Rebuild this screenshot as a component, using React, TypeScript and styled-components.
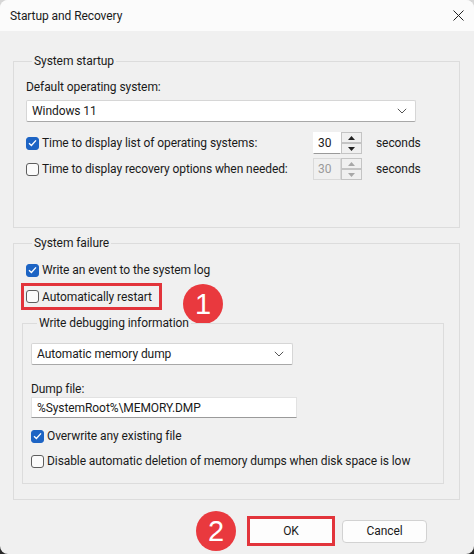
import React from "react";
import styled, { createGlobalStyle } from "styled-components";

const Global = createGlobalStyle`
  html, body { margin: 0; padding: 0; }
  body {
    background: linear-gradient(#d6d6d6 0%, #d6d6d6 92%, #2a2a2a 96%);
    font-family: Roboto, "Noto Sans", sans-serif;
    font-size: 12px;
    letter-spacing: -0.08px;
    color: #1a1a1a;
  }
  * { box-sizing: border-box; }
`;

const Window = styled.div`
  width: 474px;
  height: 554px;
  background: #f0f0f0;
  border-radius: 8px;
  overflow: hidden;
  display: flex;
  flex-direction: column;
`;

const TitleBar = styled.div`
  height: 31px;
  background: #fbfbfb;
  display: flex;
  align-items: center;
  justify-content: space-between;
  padding: 0 10px 0 10px;
  font-size: 12px;
  flex-shrink: 0;
`;

const Body = styled.div`
  padding: 22px 14px 0 13px;
  display: flex;
  flex-direction: column;
`;

const Group = styled.fieldset<{ $pt: number; $pb: number; $pl: number; $mt?: number; $w?: number; $ml?: number }>`
  margin: ${(p) => p.$mt ?? 0}px 0 0 ${(p) => p.$ml ?? 0}px;
  padding: ${(p) => p.$pt}px 0 ${(p) => p.$pb}px ${(p) => p.$pl}px;
  border: 1px solid #dcdcdc;
  border-radius: 0;
  min-width: 0;
  ${(p) => (p.$w ? `width: ${p.$w}px;` : "")}
  position: relative;
  display: flex;
  flex-direction: column;
`;

const Legend = styled.legend`
  padding: 0 2px;
  margin-left: 6px;
  line-height: 16px;
  height: 16px;
`;

const Label = styled.div<{ $mt?: number }>`
  line-height: 16px;
  margin-top: ${(p) => p.$mt ?? 0}px;
`;

const SelectBox = styled.div<{ $w: number; $mt?: number }>`
  width: ${(p) => p.$w}px;
  height: 22px;
  margin-top: ${(p) => p.$mt ?? 0}px;
  background: #fff;
  border: 1px solid #d6d6d6;
  border-bottom-color: #a8a8a8;
  border-radius: 2px;
  display: flex;
  align-items: center;
  justify-content: space-between;
  padding: 0 8px 0 5px;
`;

const TextInput = styled.div<{ $w: number }>`
  width: ${(p) => p.$w}px;
  height: 21px;
  background: #fff;
  border: 1px solid #e2e2e2;
  border-bottom-color: #9a9a9a;
  display: flex;
  align-items: center;
  padding: 0 5px;
`;

const Row = styled.div<{ $mt?: number; $h?: number }>`
  display: flex;
  align-items: center;
  height: ${(p) => p.$h ?? 20}px;
  margin-top: ${(p) => p.$mt ?? 0}px;
`;

const Box = styled.span<{ $on: boolean }>`
  width: 13px;
  height: 13px;
  border-radius: 3px;
  flex-shrink: 0;
  margin-right: 3px;
  display: inline-flex;
  align-items: center;
  justify-content: center;
  background: ${(p) => (p.$on ? "#1d64c4" : "#fbfbfb")};
  border: 1px solid ${(p) => (p.$on ? "#1d64c4" : "#5e5e5e")};
`;

const CheckLabel = styled.span<{ $w?: number }>`
  line-height: 16px;
  ${(p) => (p.$w ? `width: ${p.$w}px;` : "")}
`;

const Spin = styled.div`
  display: flex;
  height: 22px;
`;

const SpinField = styled.div<{ $off?: boolean }>`
  width: 28px;
  height: 22px;
  background: ${(p) => (p.$off ? "#f0f0f0" : "#fff")};
  color: ${(p) => (p.$off ? "#9a9a9a" : "#1a1a1a")};
  border: 1px solid ${(p) => (p.$off ? "#dadada" : "#fff")};
  border-bottom-color: ${(p) => (p.$off ? "#dadada" : "#9a9a9a")};
  display: flex;
  align-items: center;
  padding-left: 4px;
`;

const SpinButtons = styled.div`
  width: 21px;
  display: flex;
  flex-direction: column;
`;

const SpinBtn = styled.div<{ $off?: boolean }>`
  height: 11px;
  background: #f0f0f0;
  border: 1px solid #c4c4c4;
  display: flex;
  align-items: center;
  justify-content: center;
  color: ${(p) => (p.$off ? "#a8a8a8" : "#222")};
`;

const Unit = styled.span`
  margin-left: 14px;
  line-height: 16px;
`;

const Highlight = styled.div<{ $mt?: number; $ml?: number }>`
  border: 3px solid #e2343b;
  margin-top: ${(p) => p.$mt ?? 0}px;
  margin-left: ${(p) => p.$ml ?? 0}px;
  width: fit-content;
  display: flex;
  align-items: center;
`;

const Badge = styled.div`
  width: 40px;
  height: 40px;
  border-radius: 50%;
  background: #e9393e;
  color: #fff;
  font-family: "Liberation Sans", Arial, sans-serif;
  font-size: 29px;
  display: flex;
  align-items: center;
  justify-content: center;
  flex-shrink: 0;
`;

const FloatBadge = styled(Badge)`
  position: absolute;
  left: 169px;
  top: 33px;
`;

const Footer = styled.div`
  display: flex;
  justify-content: flex-end;
  align-items: center;
  padding: 11px 47px 0 0;
`;

const Button = styled.div<{ $bare?: boolean }>`
  width: ${(p) => (p.$bare ? 82 : 85)}px;
  height: ${(p) => (p.$bare ? 24 : 23)}px;
  background: #fdfdfd;
  border: ${(p) => (p.$bare ? "none" : "1px solid #d2d2d2")};
  border-radius: ${(p) => (p.$bare ? 0 : 4)}px;
  display: flex;
  align-items: center;
  justify-content: center;
`;

const Chevron = () => (
  <svg width="10" height="6" viewBox="0 0 10 6">
    <path d="M0.8 0.8 L5 5 L9.2 0.8" fill="none" stroke="#555" strokeWidth="1" />
  </svg>
);

const Tick = () => (
  <svg width="9" height="8" viewBox="0 0 9 8">
    <path d="M1 4.2 L3.4 6.4 L8 1.4" fill="none" stroke="#fff" strokeWidth="1.4" />
  </svg>
);

const Arrow = ({ up }: { up: boolean }) => (
  <svg width="7" height="4" viewBox="0 0 7 4">
    <path d={up ? "M0 4 L3.5 0 L7 4 Z" : "M0 0 L3.5 4 L7 0 Z"} fill="currentColor" />
  </svg>
);

const Close = () => (
  <svg width="11" height="11" viewBox="0 0 11 11">
    <path d="M0.5 0.5 L10.5 10.5 M10.5 0.5 L0.5 10.5" stroke="#222" strokeWidth="1" />
  </svg>
);

const Check = ({ on, children, w }: { on: boolean; children: React.ReactNode; w?: number }) => (
  <>
    <Box $on={on}>{on && <Tick />}</Box>
    <CheckLabel $w={w}>{children}</CheckLabel>
  </>
);

const Spinner = ({ off }: { off?: boolean }) => (
  <Spin>
    <SpinField $off={off}>30</SpinField>
    <SpinButtons>
      <SpinBtn $off={off}>
        <Arrow up />
      </SpinBtn>
      <SpinBtn $off={off}>
        <Arrow up={false} />
      </SpinBtn>
    </SpinButtons>
  </Spin>
);

export default function App() {
  return (
    <>
      <Global />
      <Window>
        <TitleBar>
          <span>Startup and Recovery</span>
          <Close />
        </TitleBar>
        <Body>
          <Group $pt={10} $pb={47} $pl={12}>
            <Legend>System startup</Legend>
            <Label>Default operating system:</Label>
            <SelectBox $w={390} $mt={5}>
              <span>Windows 11</span>
              <Chevron />
            </SelectBox>
            <Row $mt={10} $h={22}>
              <Check on w={271}>Time to display list of operating systems:</Check>
              <Spinner />
              <Unit>seconds</Unit>
            </Row>
            <Row $mt={4} $h={22}>
              <Check on={false} w={271}>Time to display recovery options when needed:</Check>
              <Spinner off />
              <Unit>seconds</Unit>
            </Row>
          </Group>

          <Group $pt={9} $pb={15} $pl={12} $mt={7}>
            <Legend>System failure</Legend>
            <Row>
              <Check on>Write an event to the system log</Check>
            </Row>
            <Highlight $mt={3} $ml={-5}>
              <Row $h={21} style={{ padding: "0 7px 0 2px" }}>
                <Check on={false}>Automatically restart</Check>
              </Row>
            </Highlight>
            <FloatBadge>1</FloatBadge>

            <Group $pt={12} $pb={12} $pl={8} $mt={5} $ml={-4} $w={422}>
              <Legend>Write debugging information</Legend>
              <SelectBox $w={262}>
                <span>Automatic memory dump</span>
                <Chevron />
              </SelectBox>
              <Label $mt={16}>Dump file:</Label>
              <TextInput $w={266}>%SystemRoot%\MEMORY.DMP</TextInput>
              <Row $mt={8}>
                <Check on>Overwrite any existing file</Check>
              </Row>
              <Row $mt={5}>
                <Check on={false}>Disable automatic deletion of memory dumps when disk space is low</Check>
              </Row>
            </Group>
          </Group>
        </Body>
        <Footer>
          <Badge style={{ marginRight: 11 }}>2</Badge>
          <Highlight>
            <Button $bare>OK</Button>
          </Highlight>
          <Button style={{ marginLeft: 7 }}>Cancel</Button>
        </Footer>
      </Window>
    </>
  );
}
